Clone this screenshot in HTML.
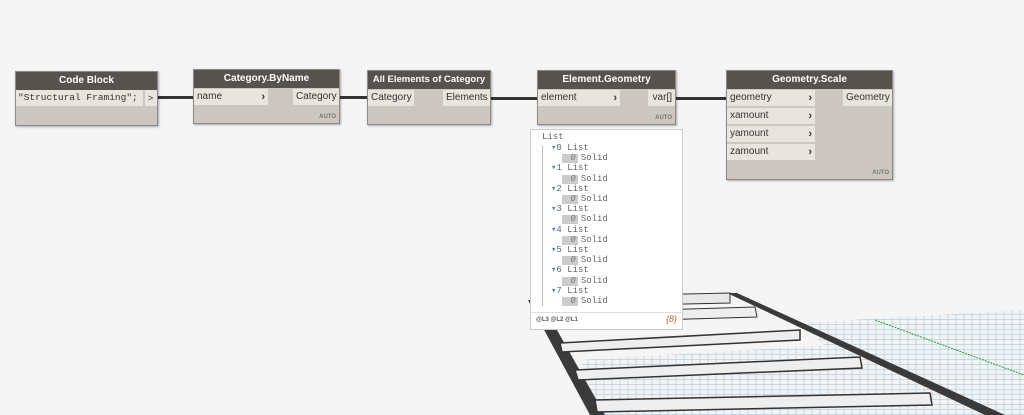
<!DOCTYPE html>
<html><head><style>
*{margin:0;padding:0;box-sizing:border-box}
body{width:1024px;height:415px;background:#f5f5f5;position:relative;overflow:hidden;font-family:"Liberation Sans",sans-serif;}
.n{position:absolute;background:#ccc8c1;border:1px solid #8d8a85;box-shadow:1px 1px 2px rgba(0,0,0,.3)}
.h{background:#56524d;color:#fff;font-weight:bold;font-size:10px;text-align:center;height:18px;line-height:18px;white-space:nowrap;overflow:hidden}
.r{position:absolute;background:#e8e5df;font-size:10px;color:#333;height:16px;line-height:16px;padding-left:3px;white-space:nowrap;overflow:hidden}
.a{position:absolute;right:3px;top:0;font-weight:bold;font-size:11px}
.auto{position:absolute;right:3px;bottom:3px;font-size:6px;font-weight:bold;color:#777}
.w{position:absolute;height:3px;background:#333}
.p{position:absolute;font-family:"Liberation Mono",monospace;font-size:9px;color:#666}
.z{display:inline-block;background:#ccc;color:#777;font-style:italic;width:16px;text-align:right;padding-right:2px;margin-right:3px;line-height:9px}
</style></head><body>
<svg style="position:absolute;left:0;top:0" width="1024" height="415">
<defs><pattern id="m" width="8" height="5" patternUnits="userSpaceOnUse"><rect width="8" height="5" fill="#f1f3f5"/><path d="M0 4.5H8M4 0V5" stroke="#bcd0de" stroke-width="0.8"/></pattern></defs>
<polygon points="800,323 1024,310 1024,415 900,415" fill="url(#m)"/>
<polygon points="580,360 830,345 960,415 600,415" fill="url(#m)"/>
<polygon points="528,300 540,300 605,415 590,415" fill="#3a3a3a"/>
<polygon points="727,293 737,293 1005,415 985,415" fill="#3a3a3a"/>
<polygon points="553,297 730,293 730,303 555,307" fill="#e8e8e8" stroke="#333" stroke-width="1"/>
<polygon points="555,313 755,307 757,317 558,323" fill="#eee" stroke="#333" stroke-width="1"/>
<polygon points="560,343 800,330 800,340 562,352" fill="#eee" stroke="#333" stroke-width="1.5"/>
<polygon points="575,370 860,357 862,368 578,380" fill="#eee" stroke="#333" stroke-width="1.5"/>
<polygon points="595,400 930,393 932,405 597,412" fill="#eee" stroke="#333" stroke-width="1.5"/>
<line x1="875" y1="320" x2="1024" y2="375" stroke="#2a2" stroke-width="1" stroke-dasharray="2,1"/>
</svg>
<div class="w" style="left:158px;top:96px;width:36px"></div>
<div class="w" style="left:339px;top:96px;width:28px"></div>
<div class="w" style="left:490px;top:97px;width:47px"></div>
<div class="w" style="left:675px;top:97px;width:51px"></div>

<div class="n" style="left:15px;top:71px;width:143px;height:55px"><div class="h">Code Block</div>
<div class="r" style="left:0;top:18px;width:127px;font-family:'Liberation Mono',monospace;font-size:9.5px;padding-left:2px">"Structural Framing";</div>
<div class="r" style="left:129px;top:18px;width:12px;font-size:9px">&gt;</div></div>

<div class="n" style="left:193px;top:69px;width:147px;height:55px"><div class="h">Category.ByName</div>
<div class="r" style="left:0;top:19px;width:74px">name<span class="a">›</span></div>
<div class="r" style="left:99px;top:19px;width:46px;text-align:right;padding-right:3px">Category</div><div class="auto">AUTO</div></div>

<div class="n" style="left:367px;top:70px;width:124px;height:55px"><div class="h" style="font-size:9.5px">All Elements of Category</div>
<div class="r" style="left:0;top:19px;width:46px">Category</div>
<div class="r" style="left:75px;top:19px;width:47px;text-align:right;padding-right:3px">Elements</div></div>

<div class="n" style="left:537px;top:70px;width:139px;height:55px"><div class="h">Element.Geometry</div>
<div class="r" style="left:0;top:19px;width:82px">element<span class="a">›</span></div>
<div class="r" style="left:110px;top:19px;width:27px;text-align:right;padding-right:3px">var[]</div><div class="auto">AUTO</div></div>

<div class="n" style="left:726px;top:70px;width:167px;height:110px"><div class="h">Geometry.Scale</div>
<div class="r" style="left:0;top:19px;width:88px">geometry<span class="a">›</span></div>
<div class="r" style="left:0;top:37px;width:88px">xamount<span class="a">›</span></div>
<div class="r" style="left:0;top:55px;width:88px">yamount<span class="a">›</span></div>
<div class="r" style="left:0;top:73px;width:88px">zamount<span class="a">›</span></div>
<div class="r" style="left:116px;top:19px;width:49px;text-align:right;padding-right:3px">Geometry</div><div class="auto">AUTO</div></div>

<div style="position:absolute;left:530px;top:129px;width:153px;height:201px;background:#fff;border:1px solid #ccc">
<div style="position:absolute;left:11px;top:16px;width:1px;height:160px;background:#bbb"></div>
<div class="p" style="left:11px;top:2px">List</div>
<div style="position:absolute;left:0;top:182px;width:151px;border-top:1px solid #ddd"></div>
<div style="position:absolute;left:5px;top:187px;font-size:6px;color:#555;font-weight:bold">@L3 @L2 @L1</div>
<div style="position:absolute;right:5px;top:184px;font-size:9px;color:#b06030;font-style:italic">{8}</div>
</div>
<div class="p" style="left:551px;top:143px;line-height:10.2px;white-space:pre"><span style="color:#48c">▾</span>0 List
  <span class="z">0</span>Solid
<span style="color:#48c">▾</span>1 List
  <span class="z">0</span>Solid
<span style="color:#48c">▾</span>2 List
  <span class="z">0</span>Solid
<span style="color:#48c">▾</span>3 List
  <span class="z">0</span>Solid
<span style="color:#48c">▾</span>4 List
  <span class="z">0</span>Solid
<span style="color:#48c">▾</span>5 List
  <span class="z">0</span>Solid
<span style="color:#48c">▾</span>6 List
  <span class="z">0</span>Solid
<span style="color:#48c">▾</span>7 List
  <span class="z">0</span>Solid</div>
</body></html>
